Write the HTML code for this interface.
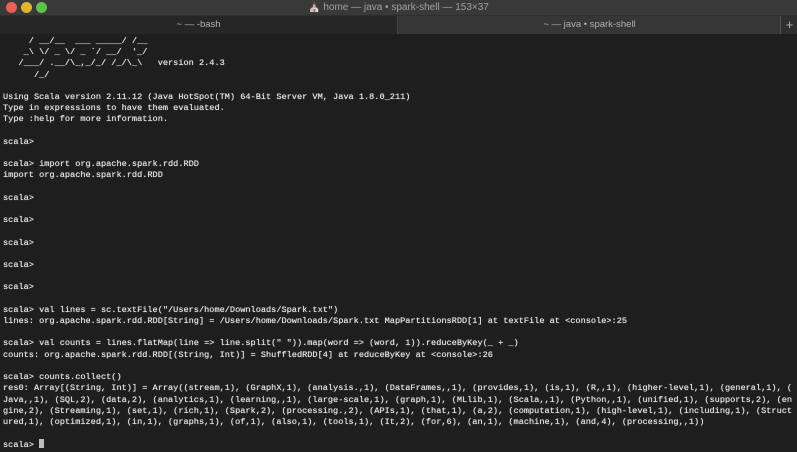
<!DOCTYPE html>
<html><head><meta charset="utf-8"><style>
html,body{margin:0;padding:0;}
body{width:797px;height:451px;overflow:hidden;background:#1e1e1e;position:relative;font-family:"Liberation Sans",sans-serif;}
#title{position:absolute;left:0;top:0;width:797px;height:15px;background:#393939;color:#a0a0a0;font-size:10px;line-height:15px;text-align:center;}
.dot{position:absolute;top:2px;width:11px;height:11px;border-radius:50%;}
#tabs{position:absolute;left:0;top:15px;width:797px;height:19px;background:#2a2a2a;border-top:1px solid #2e2e2e;box-sizing:border-box;}
.tab{position:absolute;top:0;height:18px;line-height:18px;font-size:9.5px;color:#b0b0b0;text-align:center;}
pre{position:absolute;left:3px;top:36px;margin:0;font-family:"Liberation Mono",monospace;font-size:8.6px;line-height:11.2px;color:#e2e2e2;white-space:pre;text-shadow:0 0 0.6px #e2e2e2;}
.cur{display:inline-block;width:5px;height:9px;background:#bdbdbd;vertical-align:-1px;}
</style></head><body>
<div id="title">
<span class="dot" style="left:6px;background:#ec5f57"></span>
<span class="dot" style="left:21px;background:#e0b42f"></span>
<span class="dot" style="left:36px;background:#5ec24a"></span>
<span style="color:#b38b5a">&#9962;</span> home — java • spark-shell — 153×37</div>
<div id="tabs">
<div class="tab" style="left:0;width:397px;background:#262626;">~ — -bash</div>
<div class="tab" style="left:397px;width:383px;background:#363636;border-left:1px solid #444;">~ — java • spark-shell</div>
<div class="tab" style="left:780px;width:17px;background:#2f2f2f;border-left:1px solid #555;font-size:13px;">+</div>
</div>
<pre>     / __/__  ___ _____/ /__
    _\ \/ _ \/ _ `/ __/  '_/
   /___/ .__/\_,_/_/ /_/\_\   version 2.4.3
      /_/

Using Scala version 2.11.12 (Java HotSpot(TM) 64-Bit Server VM, Java 1.8.0_211)
Type in expressions to have them evaluated.
Type :help for more information.

scala&gt;

scala&gt; import org.apache.spark.rdd.RDD
import org.apache.spark.rdd.RDD

scala&gt;

scala&gt;

scala&gt;

scala&gt;

scala&gt;

scala&gt; val lines = sc.textFile("/Users/home/Downloads/Spark.txt")
lines: org.apache.spark.rdd.RDD[String] = /Users/home/Downloads/Spark.txt MapPartitionsRDD[1] at textFile at &lt;console&gt;:25

scala&gt; val counts = lines.flatMap(line =&gt; line.split(" ")).map(word =&gt; (word, 1)).reduceByKey(_ + _)
counts: org.apache.spark.rdd.RDD[(String, Int)] = ShuffledRDD[4] at reduceByKey at &lt;console&gt;:26

scala&gt; counts.collect()
res0: Array[(String, Int)] = Array((stream,1), (GraphX,1), (analysis.,1), (DataFrames,,1), (provides,1), (is,1), (R,,1), (higher-level,1), (general,1), (
Java,,1), (SQL,2), (data,2), (analytics,1), (learning,,1), (large-scale,1), (graph,1), (MLlib,1), (Scala,,1), (Python,,1), (unified,1), (supports,2), (en
gine,2), (Streaming,1), (set,1), (rich,1), (Spark,2), (processing.,2), (APIs,1), (that,1), (a,2), (computation,1), (high-level,1), (including,1), (Struct
ured,1), (optimized,1), (in,1), (graphs,1), (of,1), (also,1), (tools,1), (It,2), (for,6), (an,1), (machine,1), (and,4), (processing,,1))

scala&gt; <span class="cur"></span></pre>
</body></html>
